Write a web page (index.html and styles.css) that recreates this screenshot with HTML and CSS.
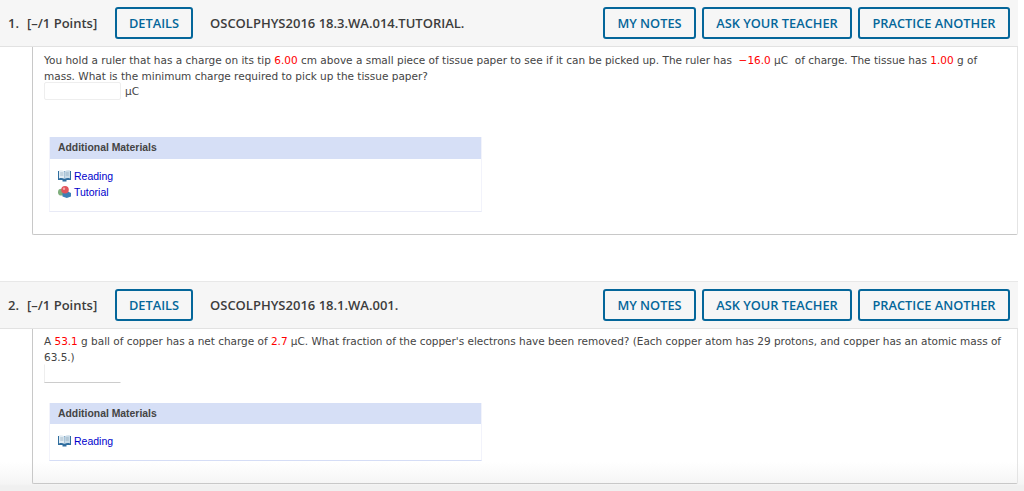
FILE: index.html
```html
<!DOCTYPE html>
<html lang="en">
<head>
    <meta charset="UTF-8">
    <meta name="viewport" content="width=device-width, initial-scale=1.0">
    <title>Assignment Questions</title>
    <link rel="stylesheet" href="styles.css">
</head>
<body>
    <svg class="icon-defs" width="0" height="0" aria-hidden="true">
        <symbol id="icon-book" viewBox="0 0 13 12">
            <path d="M0 1 H13 V10 H8.5 V11.5 H4.5 V10 H0 Z" fill="#2f6d9e"/>
            <path d="M1 0.6 C3 0 5 0.3 6.5 1.5 V9 C5 8 3 7.8 1 8.4 Z" fill="#e3edf4"/>
            <path d="M12 0.6 C10 0 8 0.3 6.5 1.5 V9 C8 8 10 7.8 12 8.4 Z" fill="#c9dbe8"/>
            <path d="M2.2 3 H5.4 M2.2 5 H5.4 M7.6 3 H10.8 M7.6 5 H10.8" stroke="#86a3b8" stroke-width="0.7"/>
        </symbol>
        <symbol id="icon-tutorial" viewBox="0 0 13 12">
            <circle cx="3.4" cy="6.2" r="3.4" fill="#7fae7c"/>
            <path d="M4.5 7 L8.8 5 L13 7 V10.5 L8.8 12 L4.5 10.5 Z" fill="#3d7fb5"/>
            <circle cx="7" cy="3.8" r="3.8" fill="#e2545c"/>
            <circle cx="6" cy="2.8" r="1.2" fill="#f3a6a6"/>
        </symbol>
    </svg>

    <div class="question">
        <div class="question-head">
            <span class="question-num">1.</span>
            <span class="question-points">[&#8211;/1 Points]</span>
            <a class="btn btn-details">DETAILS</a>
            <span class="question-code">OSCOLPHYS2016 18.3.WA.014.TUTORIAL.</span>
            <div class="head-actions">
                <a class="btn btn-notes">MY NOTES</a>
                <a class="btn btn-ask">ASK YOUR TEACHER</a>
                <a class="btn btn-practice">PRACTICE ANOTHER</a>
            </div>
        </div>
        <div class="question-body first">
            <p class="question-text">You hold a ruler that has a charge on its tip <span class="val">6.00</span> cm above a small piece of tissue paper to see if it can be picked up. The ruler has &nbsp;<span class="val">&minus;16.0</span> &micro;C &nbsp;of charge. The tissue has <span class="val">1.00</span> g of mass. What is the minimum charge required to pick up the tissue paper?</p>
            <div class="answer-row">
                <span class="answer-box"></span>
                <span class="answer-unit">&micro;C</span>
            </div>
            <div class="materials">
                <div class="materials-title">Additional Materials</div>
                <div class="materials-list">
                    <a class="material-link"><svg class="material-icon"><use href="#icon-book"/></svg>Reading</a>
                    <a class="material-link"><svg class="material-icon"><use href="#icon-tutorial"/></svg>Tutorial</a>
                </div>
            </div>
        </div>
    </div>

    <div class="question">
        <div class="question-head">
            <span class="question-num">2.</span>
            <span class="question-points">[&#8211;/1 Points]</span>
            <a class="btn btn-details">DETAILS</a>
            <span class="question-code">OSCOLPHYS2016 18.1.WA.001.</span>
            <div class="head-actions">
                <a class="btn btn-notes">MY NOTES</a>
                <a class="btn btn-ask">ASK YOUR TEACHER</a>
                <a class="btn btn-practice">PRACTICE ANOTHER</a>
            </div>
        </div>
        <div class="question-body second">
            <p class="question-text wide">A <span class="val">53.1</span> g ball of copper has a net charge of <span class="val">2.7</span> &micro;C. What fraction of the copper's electrons have been removed? (Each copper atom has 29 protons, and copper has an atomic mass of 63.5.)</p>
            <div class="answer-row">
                <span class="answer-box underline"></span>
            </div>
            <div class="materials">
                <div class="materials-title">Additional Materials</div>
                <div class="materials-list">
                    <a class="material-link"><svg class="material-icon"><use href="#icon-book"/></svg>Reading</a>
                </div>
            </div>
        </div>
    </div>
</body>
</html>
```

FILE: styles.css
```css
body {
    margin: 0;
    height: 491px;
    overflow: hidden;
    background: linear-gradient(#fff 0, #fff 462px, #f5f5f5 484px, #f0f0f0 486px);
    font-family: 'DejaVu Sans', Verdana, sans-serif;
    color: #444;
}

.icon-defs {
    position: absolute;
}

.question {
    width: 1018px;
}

.question + .question {
    margin-top: 46px;
}

.question-head {
    display: flex;
    align-items: center;
    height: 46px;
    width: 1002px;
    padding: 0 8px;
    background: #f6f6f6;
    border-bottom: 1px solid #e2e2e2;
    font-family: 'Open Sans', sans-serif;
    font-weight: 600;
    font-size: 13px;
    color: #3d3d3d;
}

.question + .question .question-head {
    height: 45px;
    padding-bottom: 1px;
    border-top: 1px solid #e8e8e8;
}

.question-num {
    width: 19px;
}

.question-points {
    width: 88px;
}

.question-code {
    margin-left: 17px;
}

.head-actions {
    margin-left: auto;
    display: flex;
    gap: 6px;
}

.btn {
    display: flex;
    align-items: center;
    justify-content: center;
    box-sizing: border-box;
    height: 32px;
    border: 2px solid #04669a;
    border-radius: 3px;
    background: #f6f6f6;
    color: #04669a;
    font-family: 'Open Sans', sans-serif;
    font-weight: 600;
    font-size: 12.8px;
}

.btn-details { width: 78px; }
.btn-notes { width: 93px; }
.btn-ask { width: 150px; }
.btn-practice { width: 152px; }

.question-body {
    margin-left: 32px;
    padding: 5px 0 0 11px;
    border-left: 1px solid #c8c8c8;
    border-bottom: 1px solid #c8c8c8;
    border-right: 1px solid #e4e4e4;
    border-radius: 0 0 2px 2px;
}

.question-body.first { height: 182px; }

.question-body.second {
    height: 150px;
    padding-top: 4px;
}

.question-text {
    margin: 0 12px 0 0;
    font-size: 10.5px;
    line-height: 16px;
    color: #444;
}

.question-text.wide {
    margin-right: 0;
    letter-spacing: -0.02px;
}

.val {
    color: #f00;
}

.answer-row {
    display: flex;
    align-items: center;
    gap: 4px;
    height: 18px;
    margin-top: -2px;
    font-size: 10.5px;
}

.answer-box {
    box-sizing: border-box;
    width: 77px;
    height: 18px;
    border: 1px solid #eee;
    border-radius: 2px;
}

.answer-box.underline {
    height: 19px;
    margin-top: 3px;
    border-color: #fff #fff #ccc #eee;
    border-radius: 0;
}

.materials {
    box-sizing: border-box;
    width: 433px;
    margin-left: 5px;
    border-bottom: 1px solid #e8eaf6;
    border-left: 1px solid #f2f3fb;
    border-right: 1px solid #f2f3fb;
}

.first .materials {
    margin-top: 37px;
    height: 75px;
}

.second .materials {
    margin-top: 22px;
    height: 58px;
    border-bottom-color: #d5ddf6;
}

.materials-title {
    height: 22px;
    line-height: 22px;
    padding-left: 8px;
    background: #d6dff6;
    font-family: 'Liberation Sans', Arial, sans-serif;
    font-weight: 700;
    font-size: 10.4px;
    color: #444;
}

.second .materials-title {
    height: 21px;
    line-height: 21px;
}

.materials-list {
    display: flex;
    flex-direction: column;
    gap: 3px;
    padding: 10px 0 0 8px;
}

.material-link {
    display: flex;
    align-items: center;
    gap: 3px;
    height: 13px;
    font-family: 'Liberation Sans', Arial, sans-serif;
    font-size: 10.5px;
    color: #0000cc;
}

.material-icon {
    width: 13px;
    height: 12px;
}
```
